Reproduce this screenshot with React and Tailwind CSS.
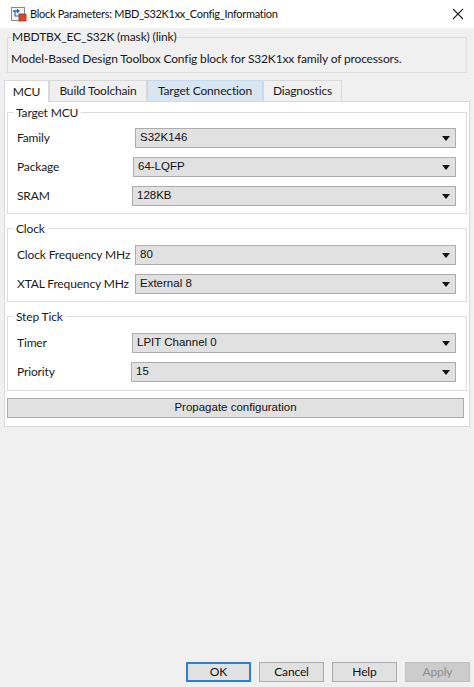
import React from "react";

const LABEL_FONT = { fontFamily: "Lato, 'Noto Sans', sans-serif", letterSpacing: "-0.15px" };
const CTRL_FONT = { fontFamily: "'Liberation Sans', Arial, sans-serif" };

function Caret() {
  return (
    <svg width="8" height="5" viewBox="0 0 8 5" className="block">
      <path d="M0 0 H8 L4 5 Z" fill="#111" />
    </svg>
  );
}

function Dropdown({ value }) {
  return (
    <div
      className="flex-1 h-[20px] bg-[#e1e1e1] border border-[#adadad] flex items-center justify-between pl-[4px] pr-[5px] text-[11.5px] text-[#111]"
      style={CTRL_FONT}
    >
      <span>{value}</span>
      <Caret />
    </div>
  );
}

function Row({ label, value, lw }) {
  return (
    <div className="flex items-center h-[20px]">
      <div
        className="text-[12px] text-[#1a1a1a] shrink-0 whitespace-nowrap"
        style={{ ...LABEL_FONT, width: lw }}
      >
        {label}
      </div>
      <Dropdown value={value} />
    </div>
  );
}

function Group({ title, children, className = "" }) {
  return (
    <fieldset className={"border border-[#dcdcdc] " + className}>
      <legend className="ml-[5px] px-[3px] text-[12px] leading-[15px] text-[#1a1a1a]" style={LABEL_FONT}>
        {title}
      </legend>
      <div className="flex flex-col gap-[9px] pl-[9px] pr-[10px]">{children}</div>
    </fieldset>
  );
}

function Tab({ children, active, hover, w }) {
  let cls =
    "h-[21px] flex items-center justify-center text-[12px] text-[#1a1a1a] border-t border-l border-r ";
  if (active) cls += "bg-white border-[#d9d9d9] h-[22px] -mb-px relative z-10";
  else if (hover) cls += "bg-[#d8e6f2] border-[#c5d9ec]";
  else cls += "bg-[#f0f0f0] border-[#d9d9d9]";
  return (
    <div className={cls} style={{ ...LABEL_FONT, width: w }}>
      {children}
    </div>
  );
}

function Btn({ children, primary, disabled }) {
  let cls = "w-[65px] h-[20px] flex items-center justify-center text-[12px] ";
  if (primary) cls += "bg-[#e1e1e1] border-2 border-[#2b7fd6] text-[#111]";
  else if (disabled) cls += "bg-[#cccccc] border border-[#bfbfbf] text-[#8c8c8c]";
  else cls += "bg-[#e1e1e1] border border-[#adadad] text-[#111]";
  return (
    <div className={cls} style={LABEL_FONT}>
      {children}
    </div>
  );
}

function TitleIcon() {
  return (
    <svg width="16" height="16" viewBox="0 0 16 16" className="block">
      <rect x="0.5" y="1.5" width="13" height="13" fill="#f4f4f4" stroke="#8a8a8a" />
      <path d="M2 5 H7" stroke="#2f6fb3" strokeWidth="1.6" />
      <path d="M6 2.5 L9 5 L6 7.5 Z" fill="#2f6fb3" />
      <path d="M4 5 V10 H8" stroke="#2f6fb3" strokeWidth="1.2" fill="none" />
      <rect x="8" y="8" width="7" height="7" fill="#d9472b" stroke="#a3301b" strokeWidth="0.8" />
    </svg>
  );
}

export default function App() {
  return (
    <div className="w-[474px] h-[687px] bg-[#f0f0f0] flex flex-col overflow-hidden relative">
      {/* title bar */}
      <div className="h-[28px] bg-white flex items-center pl-[11px] pr-[8px] shrink-0">
        <TitleIcon />
        <div
          className="ml-[3px] text-[11px] text-[#111]"
          style={{ fontFamily: "Lato, 'Noto Sans', sans-serif", letterSpacing: "-0.3px" }}
        >
          Block Parameters: MBD_S32K1xx_Config_Information
        </div>
        <div className="ml-auto mr-[2px]">
          <svg width="12" height="12" viewBox="0 0 12 12" className="block">
            <path d="M1 1 L11 11 M11 1 L1 11" stroke="#222" strokeWidth="1.1" />
          </svg>
        </div>
      </div>

      {/* mask group */}
      <div className="px-[7px] pt-[1px]">
        <fieldset className="border border-[#dcdcdc] h-[44px] px-[3px] pb-[4px]">
          <legend className="ml-[1px] px-[0px] text-[12px] leading-[16px] text-[#1a1a1a]" style={LABEL_FONT}>
            MBDTBX_EC_S32K (mask) (link)
          </legend>
          <div className="text-[12px] leading-[16px] text-[#1a1a1a] mt-[6px]" style={LABEL_FONT}>
            Model-Based Design Toolbox Config block for S32K1xx family of processors.
          </div>
        </fieldset>
      </div>

      {/* tabs */}
      <div className="flex items-end pl-[4px] mt-[7px] h-[21px]">
        <Tab active w={45}>MCU</Tab>
        <Tab w={98}>Build Toolchain</Tab>
        <Tab hover w={116}>Target Connection</Tab>
        <Tab w={79}>Diagnostics</Tab>
      </div>

      {/* tab panel */}
      <div className="mx-[4px] bg-white border border-[#d9d9d9] px-[2px] pt-[3px] pb-[8px]">
        <Group title="Target MCU" className="pt-[8px] pb-[7px]">
          <Row label="Family" value="S32K146" lw={118} />
          <Row label="Package" value="64-LQFP" lw={116} />
          <Row label="SRAM" value="128KB" lw={115} />
        </Group>
        <Group title="Clock" className="mt-[7px] pt-[9px] pb-[7px]">
          <Row label="Clock Frequency MHz" value="80" lw={118} />
          <Row label="XTAL Frequency MHz" value="External 8" lw={118} />
        </Group>
        <Group title="Step Tick" className="mt-[7px] pt-[9px] pb-[8px]">
          <Row label="Timer" value="LPIT Channel 0" lw={115} />
          <Row label="Priority" value="15" lw={114} />
        </Group>
        <div
          className="mt-[7px] mr-[3px] h-[20px] bg-[#e1e1e1] border border-[#adadad] flex items-center justify-center text-[11.5px] text-[#111]"
          style={CTRL_FONT}
        >
          Propagate configuration
        </div>
      </div>

      <div className="flex-1" />

      {/* bottom buttons */}
      <div className="flex justify-end gap-[8px] pr-[4px] pb-[5px]">
        <Btn primary>OK</Btn>
        <Btn>Cancel</Btn>
        <Btn>Help</Btn>
        <Btn disabled>Apply</Btn>
      </div>
    </div>
  );
}
